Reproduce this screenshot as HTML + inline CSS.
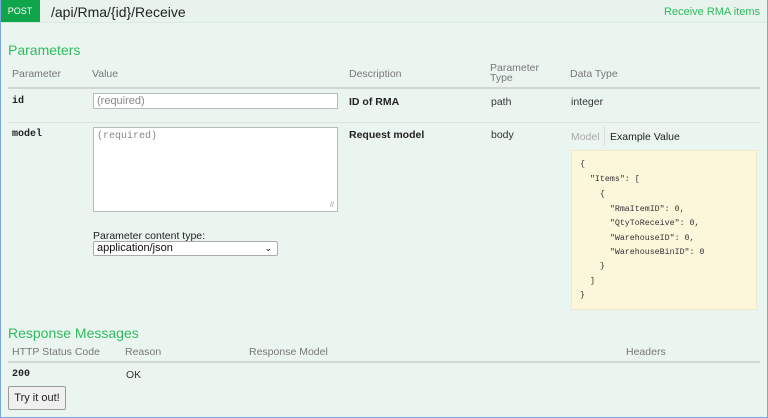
<!DOCTYPE html>
<html><head><meta charset="utf-8"><style>
*{margin:0;padding:0;box-sizing:border-box}
body{width:768px;height:418px;overflow:hidden;background:#ebf5f0;font-family:"Liberation Sans",sans-serif;position:relative;color:#333}
.a{position:absolute;white-space:nowrap}
.frame{position:absolute;left:0;top:0;width:768px;height:418px;border:1px solid #7aa8e6;border-top:none}
.hdr{position:absolute;left:0;top:0;width:768px;height:23px;background:#e7f3ec;border-bottom:1px solid #d8eadf}
.post{position:absolute;left:0;top:0;width:40px;height:22px;background:#10a54a;color:#fff;font-size:9px;line-height:22px;text-align:center}
.g{color:#2fbb5e}
.th{font-size:10.5px;color:#777}
.line{position:absolute;height:2px;background:#d0d6d2}
.sep{position:absolute;height:1px;background:#dde3df}
.b{font-weight:bold;font-size:10.5px;color:#222}
.m{font-family:"Liberation Mono",monospace}
.inp{position:absolute;background:#fff;border:1px solid #bbb;font-size:11px;color:#888;padding:2px 3px}
.j{font-family:"Liberation Mono",monospace;font-size:8.3px;color:#333;position:absolute;white-space:pre;left:580px}
</style></head><body>
<div class="hdr"></div>
<div class="post">POST</div>
<div class="a" style="left:51px;top:4px;font-size:14px;color:#222">/api/Rma/{id}/Receive</div>
<div class="a g" style="right:8px;top:6px;font-size:11px">Receive RMA items</div>

<div class="a g" style="left:8px;top:42px;font-size:14px">Parameters</div>
<div class="a th" style="left:12px;top:68px">Parameter</div>
<div class="a th" style="left:92px;top:68px">Value</div>
<div class="a th" style="left:349px;top:68px">Description</div>
<div class="a th" style="left:490px;top:63px;line-height:10px">Parameter<br>Type</div>
<div class="a th" style="left:570px;top:68px">Data Type</div>
<div class="line" style="left:8px;top:87px;width:752px"></div>

<div class="a b m" style="left:12px;top:96px;font-size:10px">id</div>
<div class="inp" style="left:93px;top:93px;width:245px;height:16px;line-height:10px">(required)</div>
<div class="a b" style="left:349px;top:96px">ID of RMA</div>
<div class="a" style="left:491px;top:96px;font-size:10.5px">path</div>
<div class="a" style="left:571px;top:96px;font-size:10.5px">integer</div>
<div class="sep" style="left:8px;top:122px;width:752px"></div>

<div class="a b m" style="left:12px;top:129px;font-size:10px">model</div>
<div class="inp m" style="left:93px;top:127px;width:245px;height:85px;font-size:10px;padding:3px">(required)</div>
<div class="a" style="left:330px;top:202px;font-size:7px;color:#888">//</div>
<div class="a b" style="left:349px;top:129px">Request model</div>
<div class="a" style="left:491px;top:129px;font-size:10.5px">body</div>
<div class="a" style="left:571px;top:131px;font-size:10.5px;color:#aaa">Model</div>
<div class="a" style="left:604px;top:126px;width:1px;height:20px;background:#ddd"></div>
<div class="a" style="left:610px;top:131px;font-size:10.5px;color:#222">Example Value</div>
<div class="a" style="left:571px;top:150px;width:186px;height:160px;background:#fcf6db;border:1px solid #f0e8c8"></div>
<div class="j" style="top:160px">{</div>
<div class="j" style="top:175px">  "Items": [</div>
<div class="j" style="top:190px">    {</div>
<div class="j" style="top:205px">      "RmaItemID": 0,</div>
<div class="j" style="top:219px">      "QtyToReceive": 0,</div>
<div class="j" style="top:234px">      "WarehouseID": 0,</div>
<div class="j" style="top:248px">      "WarehouseBinID": 0</div>
<div class="j" style="top:262px">    }</div>
<div class="j" style="top:277px">  ]</div>
<div class="j" style="top:291px">}</div>

<div class="a" style="left:93px;top:230px;font-size:10.5px;color:#222">Parameter content type:</div>
<div class="a" style="left:93px;top:241px;width:185px;height:15px;background:#fff;border:1px solid #aaa;border-radius:2px;font-size:11px;color:#111;padding:0 3px;line-height:13px">application/json<span style="position:absolute;right:5px;top:0;font-size:9px">&#8964;</span></div>

<div class="a g" style="left:8px;top:325px;font-size:14px">Response Messages</div>
<div class="a th" style="left:12px;top:346px">HTTP Status Code</div>
<div class="a th" style="left:125px;top:346px">Reason</div>
<div class="a th" style="left:249px;top:346px">Response Model</div>
<div class="a th" style="left:626px;top:346px">Headers</div>
<div class="line" style="left:8px;top:361px;width:752px"></div>
<div class="a m" style="left:12px;top:369px;font-size:10px;font-weight:bold;color:#222">200</div>
<div class="a" style="left:126px;top:369px;font-size:10.5px">OK</div>
<div class="a" style="left:8px;top:386px;width:58px;height:24px;background:#f0f0f0;border:1px solid #999;border-radius:2px;font-size:11px;color:#222;text-align:center;line-height:22px">Try it out!</div>
<div class="frame"></div>
</body></html>
